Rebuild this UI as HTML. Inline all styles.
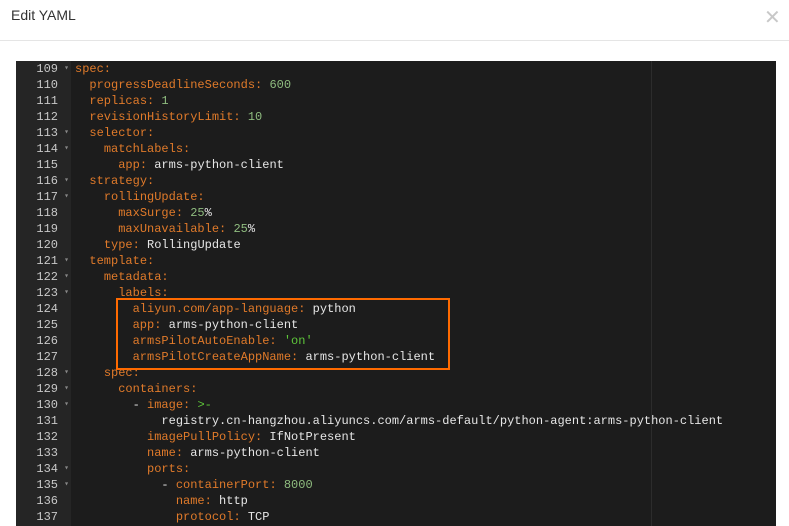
<!DOCTYPE html>
<html><head><style>
body{margin:0;width:789px;height:526px;background:#fff;position:relative;overflow:hidden;font-family:"Liberation Sans",sans-serif}
.hd{position:absolute;left:11px;top:7px;font-size:14px;color:#333}
.x{position:absolute;left:764px;top:5px;font-size:20px;color:#c8c8c8}
.ln{position:absolute;left:0;top:40px;width:789px;height:1px;background:#e5e5e5}
.ed{position:absolute;left:16px;top:61px;width:760px;height:465px;background:#1c1c1c;overflow:hidden}
.gut{position:absolute;left:0;top:0;width:55px;height:100%;background:#252525}
.pm{position:absolute;left:635px;top:0;width:1px;height:100%;background:#2c2c2c}
pre{margin:0;position:absolute;top:0;left:0;font-family:"Liberation Mono",monospace;font-size:12px;line-height:16px;color:#e6e6e6}
.n{display:inline-block;width:42px;text-align:right;color:#c8c8c8}
.a{display:inline-block;width:17px;color:#888;font-size:8px;text-align:center;vertical-align:top}
.k{color:#e07a2a}.v{color:#8fbc7f}.s{color:#5ec63a}
.box{position:absolute;left:116px;top:298px;width:330px;height:68px;border:2px solid #ff6a00}
</style></head><body>
<div class="hd">Edit YAML</div><div class="x">✕</div><div class="ln"></div>
<div class="ed"><div class="gut"></div><div class="pm"></div>
<pre><span class="n">109</span><span class="a">▾</span><span class="k">spec:</span>
<span class="n">110</span><span class="a"></span>  <span class="k">progressDeadlineSeconds:</span> <span class="v">600</span>
<span class="n">111</span><span class="a"></span>  <span class="k">replicas:</span> <span class="v">1</span>
<span class="n">112</span><span class="a"></span>  <span class="k">revisionHistoryLimit:</span> <span class="v">10</span>
<span class="n">113</span><span class="a">▾</span>  <span class="k">selector:</span>
<span class="n">114</span><span class="a">▾</span>    <span class="k">matchLabels:</span>
<span class="n">115</span><span class="a"></span>      <span class="k">app:</span> arms-python-client
<span class="n">116</span><span class="a">▾</span>  <span class="k">strategy:</span>
<span class="n">117</span><span class="a">▾</span>    <span class="k">rollingUpdate:</span>
<span class="n">118</span><span class="a"></span>      <span class="k">maxSurge:</span> <span class="v">25</span>%
<span class="n">119</span><span class="a"></span>      <span class="k">maxUnavailable:</span> <span class="v">25</span>%
<span class="n">120</span><span class="a"></span>    <span class="k">type:</span> RollingUpdate
<span class="n">121</span><span class="a">▾</span>  <span class="k">template:</span>
<span class="n">122</span><span class="a">▾</span>    <span class="k">metadata:</span>
<span class="n">123</span><span class="a">▾</span>      <span class="k">labels:</span>
<span class="n">124</span><span class="a"></span>        <span class="k">aliyun.com/app-language:</span> python
<span class="n">125</span><span class="a"></span>        <span class="k">app:</span> arms-python-client
<span class="n">126</span><span class="a"></span>        <span class="k">armsPilotAutoEnable:</span> <span class="s">'on'</span>
<span class="n">127</span><span class="a"></span>        <span class="k">armsPilotCreateAppName:</span> arms-python-client
<span class="n">128</span><span class="a">▾</span>    <span class="k">spec:</span>
<span class="n">129</span><span class="a">▾</span>      <span class="k">containers:</span>
<span class="n">130</span><span class="a">▾</span>        - <span class="k">image:</span> <span class="s">&gt;-</span>
<span class="n">131</span><span class="a"></span>            registry.cn-hangzhou.aliyuncs.com/arms-default/python-agent:arms-python-client
<span class="n">132</span><span class="a"></span>          <span class="k">imagePullPolicy:</span> IfNotPresent
<span class="n">133</span><span class="a"></span>          <span class="k">name:</span> arms-python-client
<span class="n">134</span><span class="a">▾</span>          <span class="k">ports:</span>
<span class="n">135</span><span class="a">▾</span>            - <span class="k">containerPort:</span> <span class="v">8000</span>
<span class="n">136</span><span class="a"></span>              <span class="k">name:</span> http
<span class="n">137</span><span class="a"></span>              <span class="k">protocol:</span> TCP
</pre></div>
<div class="box"></div>
</body></html>
